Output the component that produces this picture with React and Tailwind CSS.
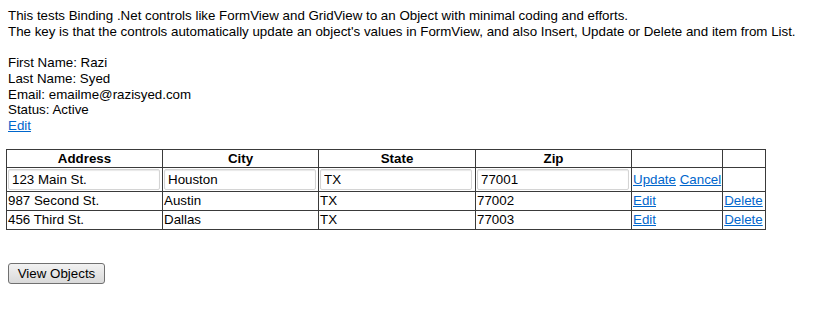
import React from "react";

const rows = [
  { address: "987 Second St.", city: "Austin", state: "TX", zip: "77002" },
  { address: "456 Third St.", city: "Dallas", state: "TX", zip: "77003" },
];

const cell = "border border-[#3a3a3a] p-px align-middle leading-[15.33px]";
const link = "text-[#0066cc] underline";

function App() {
  return (
    <div className="bg-white min-h-[312px] p-2 text-[13.33px] leading-[15.7px] text-black font-['Liberation_Sans',Arial,sans-serif]">
      <p>
        This tests Binding .Net controls like FormView and GridView to an Object
        with minimal coding and efforts.
        <br />
        The key is that the controls automatically update an object's values in
        FormView, and also Insert, Update or Delete and item from List.
      </p>
      <div className="mt-[15.7px]">
        <div>First Name: Razi</div>
        <div>Last Name: Syed</div>
        <div>Email: emailme@razisyed.com</div>
        <div>Status: Active</div>
        <a href="#" className={link}>
          Edit
        </a>
      </div>
      <table className="mt-[15px] -ml-[2px] border-collapse border border-[#3a3a3a]">
        <thead>
          <tr className="h-[18px]">
            <th className={cell + " w-[156px] font-bold"}>Address</th>
            <th className={cell + " w-[156px] font-bold"}>City</th>
            <th className={cell + " w-[157px] font-bold"}>State</th>
            <th className={cell + " w-[156px] font-bold"}>Zip</th>
            <th className={cell + " w-[91px]"}></th>
            <th className={cell + " w-[43px]"}></th>
          </tr>
        </thead>
        <tbody>
          <tr className="h-[24px]">
            {["123 Main St.", "Houston", "TX", "77001"].map((v) => (
              <td key={v} className={cell}>
                <input
                  defaultValue={v}
                  className="block w-[152px] h-[21px] px-[3px] border border-[#d4d4d4] rounded-[2px] shadow-[inset_0_1px_1px_#e8e8e8] text-[13.33px] outline-none font-['Liberation_Sans',Arial,sans-serif]"
                />
              </td>
            ))}
            <td className={cell + " whitespace-nowrap"}>
              <a href="#" className={link}>
                Update
              </a>{" "}
              <a href="#" className={link}>
                Cancel
              </a>
            </td>
            <td className={cell}></td>
          </tr>
          {rows.map((r) => (
            <tr key={r.zip} className="h-[19px]">
              <td className={cell}>{r.address}</td>
              <td className={cell}>{r.city}</td>
              <td className={cell}>{r.state}</td>
              <td className={cell}>{r.zip}</td>
              <td className={cell}>
                <a href="#" className={link}>
                  Edit
                </a>
              </td>
              <td className={cell}>
                <a href="#" className={link}>
                  Delete
                </a>
              </td>
            </tr>
          ))}
        </tbody>
      </table>
      <button className="mt-[33px] h-[21px] w-[97px] border border-[#707070] rounded-[3px] bg-gradient-to-b from-[#f2f2f2] to-[#d9d9d9] text-[13.33px] leading-none font-['Liberation_Sans',Arial,sans-serif]">
        View Objects
      </button>
    </div>
  );
}

export default App;
